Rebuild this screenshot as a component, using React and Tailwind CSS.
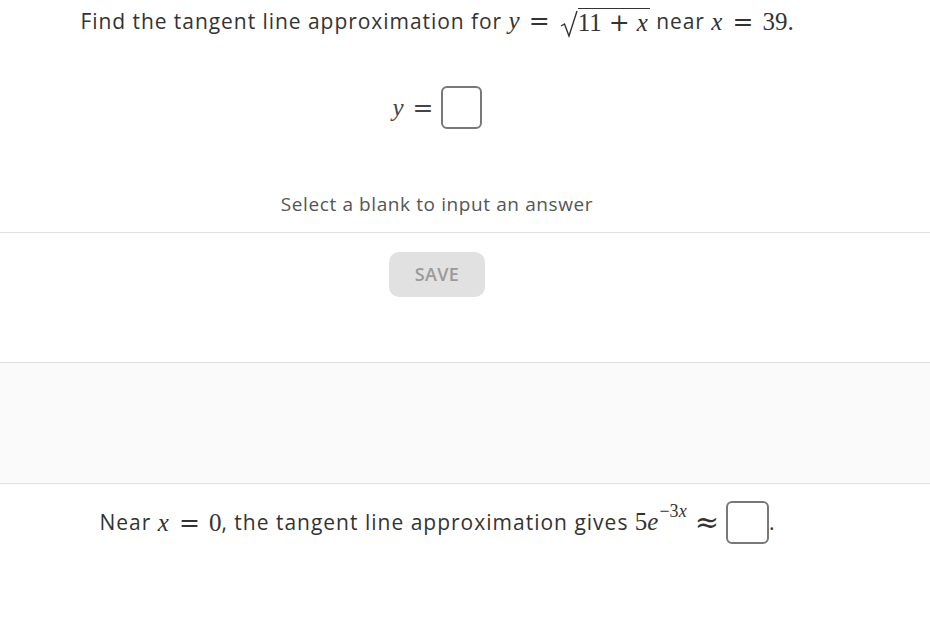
import React from "react";

function MI({ children }) {
  return <span className="italic" style={{ fontFamily: '"Liberation Serif", serif' }}>{children}</span>;
}
function MN({ children }) {
  return <span style={{ fontFamily: '"Liberation Serif", serif' }}>{children}</span>;
}
function Op({ children, cls = "mx-[8px]" }) {
  return <span className={cls} style={{ fontFamily: '"DejaVu Serif", serif', fontWeight: 300 }}>{children}</span>;
}

function Blank({ cls }) {
  return <span className={"inline-block border-2 border-[#787878] rounded-[6px] bg-white " + cls} />;
}

export default function App() {
  return (
    <div className="w-[930px] h-[638px] bg-white text-[#333] overflow-hidden" style={{ fontFamily: '"Open Sans", sans-serif' }}>
      <div className="pr-[56px] pt-0 flex justify-center">
        <p className="text-[21px] leading-[40px] whitespace-nowrap flex items-center">
          <span className="tracking-[0.95px]">Find the tangent line approximation for&nbsp;</span>
          <span className="text-[25px] flex items-center">
            <MI>y</MI>
            <Op cls="ml-[9px] mr-[10px]">=</Op>
            <span className="inline-flex items-end relative">
              <svg width="18" height="28" viewBox="0 0 18 28" className="mb-[-3px]">
                <path d="M1 16 L4.5 14 L9 26 L17 1" fill="none" stroke="#333" strokeWidth="1.4" />
              </svg>
              <span className="border-t-[1.5px] border-[#333] leading-[25px] pr-[2px]">
                <MN>11</MN>
                <Op cls="mx-[7px]">+</Op>
                <MI>x</MI>
              </span>
            </span>
          </span>
          <span className="tracking-[0.95px]">&nbsp;near&nbsp;</span>
          <span className="text-[25px]">
            <MI>x</MI>
            <Op cls="ml-[10px] mr-[9px]">=</Op>
            <MN>39.</MN>
          </span>
        </p>
      </div>

      <div className="pr-[56px] mt-[44px] flex justify-center items-center">
        <span className="text-[25px] flex items-center text-[#444]">
          <MI>y</MI>
          <Op cls="ml-[9px] mr-[7px]">=</Op>
        </span>
        <Blank cls="w-[41px] h-[43px]" />
      </div>

      <div className="pr-[56px] mt-[62px] flex justify-center">
        <p className="text-[19px] leading-[26px] text-[#555] tracking-[0.6px]">Select a blank to input an answer</p>
      </div>

      <div className="mt-[15px] border-t border-[#e0e0e0]" />

      <div className="pr-[56px] pt-[19px] h-[129px] flex justify-center">
        <button className="w-[96px] h-[45px] rounded-[10px] bg-[#e1e1e1] text-[#9a9a9a] text-[18px] font-semibold tracking-[0.4px]" style={{ fontFamily: '"Open Sans", sans-serif' }}>
          SAVE
        </button>
      </div>

      <div className="border-t border-b border-[#e0e0e0] bg-[#fafafa] h-[122px]" />

      <div className="pr-[56px] mt-[15px] flex justify-center">
        <p className="text-[21px] leading-[44px] whitespace-nowrap flex items-center">
          <span className="tracking-[1px]">Near&nbsp;</span>
          <span className="text-[25px]">
            <MI>x</MI>
            <Op cls="ml-[10px] mr-[9px]">=</Op>
            <MN>0</MN>
          </span>
          <span className="tracking-[1px]">, the tangent line approximation gives&nbsp;</span>
          <span className="text-[25px] flex items-start">
            <MN>5</MN>
            <MI>e</MI>
            <span className="text-[18px] leading-[18px] mt-[1px] ml-[1px]">
              <MN>−3</MN><MI>x</MI>
            </span>
          </span>
          <Op cls="text-[29px] ml-[8px] mr-[7px]">≈</Op>
          <Blank cls="w-[43px] h-[43px]" />
          <span>.</span>
        </p>
      </div>
    </div>
  );
}
